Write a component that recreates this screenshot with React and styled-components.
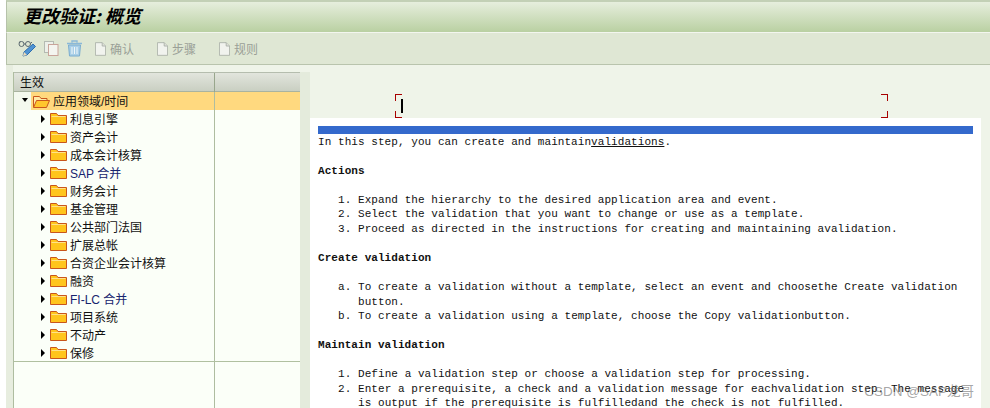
import React from 'react';
import styled, { createGlobalStyle } from 'styled-components';

const GlobalStyle = createGlobalStyle`
  html, body {
    margin: 0;
    padding: 0;
    background: #fff;
  }
`;

const CJK = `"Liberation Sans", "Noto Sans CJK SC", sans-serif`;

const TREE_ITEMS = [
  '利息引擎',
  '资产会计',
  '成本会计核算',
  'SAP 合并',
  '财务会计',
  '基金管理',
  '公共部门法国',
  '扩展总帐',
  '合资企业会计核算',
  '融资',
  'FI-LC 合并',
  '项目系统',
  '不动产',
  '保修',
];

const DocIcon = () => (
  <svg width="13" height="16" viewBox="0 0 13 16">
    <path d="M.5 .5h8l4 4v11H.5z" fill="#f1f3ee" stroke="#a9aea6" />
    <path d="M8.5 .5v4h4" fill="#dcdfd8" stroke="#a9aea6" />
  </svg>
);

const ToolButton = ({ label }) => (
  <TextTool>
    <DocIcon />
    <ToolLabel>{label}</ToolLabel>
  </TextTool>
);

const Folder = ({ open }) =>
  open ? (
    <svg width="17" height="13" viewBox="0 0 17 13">
      <path d="M.5 12V1.5h6l1.5 2h6V6" fill="#ffe9a8" stroke="#c8561c" />
      <path d="M.5 12.5L3.5 5.5H16.5L13.5 12.5z" fill="#ffc62e" stroke="#c8561c" />
    </svg>
  ) : (
    <ClosedFolder width="17" height="12" viewBox="0 0 17 12">
      <path d="M.5 11.5V.5h6l1.5 2h8.5v9z" fill="#ffc51c" stroke="#c8561c" />
      <path d="M1.5 3.5h14" stroke="#ffe18a" />
    </ClosedFolder>
  );

const App = () => (
  <Page>
    <GlobalStyle />
    <TitleBar>
      <Title>更改验证: 概览</Title>
    </TitleBar>
    <Toolbar>
      <IconGroup>
        <svg width="19" height="18" viewBox="0 0 19 18">
          <circle cx="3.5" cy="4" r="2.5" fill="none" stroke="#5c6a70" />
          <circle cx="10" cy="4" r="2.5" fill="none" stroke="#5c6a70" />
          <path d="M6 4h1.5M1 3L2.5 1M12.5 3.5L14 2" stroke="#5c6a70" fill="none" />
          <path d="M5 16l1-4L15 4l2.5 2.5L9 15z" fill="#4f93d3" stroke="#2f6fae" />
          <path d="M5 16l1-4 3 3z" fill="#f0dcb8" />
        </svg>
        <svg width="15" height="15" viewBox="0 0 15 15">
          <rect x="0.5" y="0.5" width="9" height="11" fill="#edf0ea" stroke="#b4bab2" />
          <rect x="4.5" y="3.5" width="9.5" height="11" fill="#f4f5f0" stroke="#c9a49a" />
        </svg>
        <svg width="17" height="17" viewBox="0 0 17 17">
          <path d="M1 3.5h15M6 2.5V1h5v1.5" fill="none" stroke="#8ab8d8" strokeWidth="1.4" />
          <path d="M2.5 5h12l-1 11h-10z" fill="#a9cfe8" stroke="#7aaccf" />
          <path d="M6 7v7M8.5 7v7M11 7v7" stroke="#f0f6f8" />
        </svg>
      </IconGroup>
      <ToolButton label="确认" />
      <ToolButton label="步骤" />
      <ToolButton label="规则" />
    </Toolbar>
    <Workspace>
      <Gutter />
      <TreePanel>
        <TreeHeader>
          <HeaderCell>生效</HeaderCell>
          <HeaderCell />
        </TreeHeader>
        <TreeBody>
          <TreeRow $selected>
            <RootCell>
              <RootArrow />
              <RootLabel>
                <Folder open />
                <NodeText>应用领域/时间</NodeText>
              </RootLabel>
            </RootCell>
            <SideCell />
          </TreeRow>
          {TREE_ITEMS.map((item) => (
            <TreeRow key={item}>
              <NodeCell>
                <NodeArrow />
                <Folder />
                <NodeText $latin={/^[A-Z]/.test(item)}>{item}</NodeText>
              </NodeCell>
              <SideCell />
            </TreeRow>
          ))}
        </TreeBody>
        <TreeFiller>
          <div />
          <SideCell />
        </TreeFiller>
      </TreePanel>
      <Divider />
      <MainPane>
        <FrameRow>
          <FocusFrame>
            <Corner $top $left />
            <Corner $left />
            <Corner $top />
            <Corner />
            <Caret />
          </FocusFrame>
        </FrameRow>
        <DocPage>
          <BlueBar />
          <DocLine>
            In this step, you can create and maintain<DocLink>validations</DocLink>.
          </DocLine>
          <Blank />
          <DocHeading>Actions</DocHeading>
          <Blank />
          <DocItem $mark="1.">Expand the hierarchy to the desired application area and event.</DocItem>
          <DocItem $mark="2.">Select the validation that you want to change or use as a template.</DocItem>
          <DocItem $mark="3.">Proceed as directed in the instructions for creating and maintaining avalidation.</DocItem>
          <Blank />
          <DocHeading>Create validation</DocHeading>
          <Blank />
          <DocItem $mark="a.">To create a validation without a template, select an event and choosethe Create validation button.</DocItem>
          <DocItem $mark="b.">To create a validation using a template, choose the Copy validationbutton.</DocItem>
          <Blank />
          <DocHeading>Maintain validation</DocHeading>
          <Blank />
          <DocItem $mark="1.">Define a validation step or choose a validation step for processing.</DocItem>
          <DocItem $mark="2.">Enter a prerequisite, a check and a validation message for eachvalidation step. The message is output if the prerequisite is fulfilledand the check is not fulfilled.</DocItem>
        </DocPage>
      </MainPane>
    </Workspace>
    <Watermark>CSDN @SAP龙哥</Watermark>
  </Page>
);

const Page = styled.div`
  position: relative;
  width: 990px;
  height: 408px;
  overflow: hidden;
  background: #fff;
  padding-left: 6px;
  box-sizing: border-box;
  font-family: ${CJK};
`;

const TitleBar = styled.div`
  height: 32px;
  box-sizing: border-box;
  padding: 0 0 5px 16px;
  border-top: 2px solid #c3d0b6;
  border-left: 1px solid #b6c2aa;
  background: linear-gradient(#e6eedd, #b9d0a2);
  display: flex;
  align-items: center;
`;

const Title = styled.h1`
  margin: 0;
  font-size: 18px;
  line-height: 20px;
  font-weight: 700;
  font-style: italic;
  color: #000;
  font-family: "Noto Sans CJK SC", sans-serif;
`;

const Toolbar = styled.div`
  height: 33px;
  box-sizing: border-box;
  padding-left: 11px;
  border-top: 1px solid #f3f6ef;
  border-left: 1px solid #b6c2aa;
  border-bottom: 1px solid #b9c4ad;
  background: #dfe7d4;
  display: flex;
  align-items: center;
  gap: 23px;
`;

const IconGroup = styled.div`
  display: flex;
  align-items: center;
  gap: 7px;
  margin-right: -22px;
  width: 76px;
`;

const TextTool = styled.div`
  display: flex;
  align-items: center;
  gap: 4px;
  width: 39px;
`;

const ToolLabel = styled.span`
  font-size: 12px;
  color: #9a9f97;
  white-space: nowrap;
`;

const Workspace = styled.div`
  display: flex;
  height: 343px;
  background: #eff4e9;
`;

const Gutter = styled.div`
  width: 7px;
  flex: none;
  background: #e7eddf;
`;

const TreePanel = styled.div`
  width: 286px;
  flex: none;
  margin-top: 7px;
  display: flex;
  flex-direction: column;
  border-left: 1px solid #aebda0;
  background: #fbfff8;
`;

const TreeHeader = styled.div`
  display: grid;
  grid-template-columns: 200px 1fr;
  height: 20px;
  flex: none;
  box-sizing: border-box;
  border-top: 1px solid #b5bdae;
  border-bottom: 1px solid #a9b39f;
  background: linear-gradient(#e2e5dd, #c9cfc2);
`;

const HeaderCell = styled.div`
  font-size: 12px;
  line-height: 20px;
  padding-left: 6px;
  color: #111;
  & + & {
    border-left: 1px solid #98a68c;
  }
`;

const TreeBody = styled.div`
  height: 270px;
  flex: none;
  overflow: hidden;
  box-sizing: border-box;
  border-bottom: 1px solid #b0c0a0;
`;

const TreeRow = styled.div`
  display: grid;
  grid-template-columns: 200px 1fr;
  height: 18px;
  background: ${({ $selected }) => ($selected ? 'linear-gradient(90deg, #f4f9ee 17px, #ffd97f 17px)' : 'transparent')};
`;

const SideCell = styled.div`
  border-left: 1px solid #aebda0;
`;

const RootCell = styled.div`
  display: flex;
  align-items: center;
  padding: 1px 0 0 8px;
`;

const RootLabel = styled.div`
  display: flex;
  align-items: center;
  margin-left: 5px;
`;

const RootArrow = styled.span`
  width: 0;
  height: 0;
  border-left: 3.5px solid transparent;
  border-right: 3.5px solid transparent;
  border-top: 4px solid #000;
  margin-bottom: 3px;
`;

const NodeCell = styled.div`
  display: flex;
  align-items: center;
  padding: 1px 0 0 27px;
`;

const NodeArrow = styled.span`
  width: 0;
  height: 0;
  margin: 0 5px 2px 0;
  border-top: 4px solid transparent;
  border-bottom: 4px solid transparent;
  border-left: 4px solid #000;
`;

const ClosedFolder = styled.svg`
  margin-bottom: 2px;
`;

const NodeText = styled.span`
  margin-left: 3px;
  font-size: 12px;
  line-height: 16px;
  color: ${({ $latin }) => ($latin ? '#16246e' : '#111')};
  white-space: nowrap;
`;

const TreeFiller = styled.div`
  flex: 1;
  display: grid;
  grid-template-columns: 200px 1fr;
`;

const Divider = styled.div`
  width: 10px;
  flex: none;
  margin-top: 7px;
  background: #e4ebdc;
`;

const MainPane = styled.div`
  flex: 1;
  min-width: 0;
  background: #eff4e9;
  padding-right: 9px;
`;

const FrameRow = styled.div`
  height: 53px;
  box-sizing: border-box;
  padding: 29px 0 0 85px;
`;

const FocusFrame = styled.div`
  position: relative;
  width: 493px;
  height: 24px;
`;

const Corner = styled.span`
  position: absolute;
  width: 6px;
  height: 6px;
  border: 0 solid #a80000;
  ${({ $left }) => ($left ? 'left: 0; border-left-width: 1px;' : 'right: 0; border-right-width: 1px;')}
  ${({ $top }) => ($top ? 'top: 0; border-top-width: 1px;' : 'bottom: 0; border-bottom-width: 1px;')}
`;

const Caret = styled.span`
  position: absolute;
  left: 6px;
  top: 5px;
  width: 2px;
  height: 14px;
  background: #000;
`;

const DocPage = styled.div`
  height: 290px;
  overflow: hidden;
  box-sizing: border-box;
  background: #fff;
  padding: 8px 8px 0;
  font-family: "Liberation Mono", "DejaVu Sans Mono", monospace;
  font-size: 11px;
  letter-spacing: 0.06px;
  line-height: 14.55px;
  color: #111;
`;

const BlueBar = styled.div`
  height: 8px;
  margin-bottom: 0.5px;
  background: #3469cc;
`;

const DocLine = styled.div`
  white-space: nowrap;
`;

const DocLink = styled.span`
  text-decoration: underline;
`;

const Blank = styled.div`
  height: 14.55px;
`;

const DocHeading = styled.div`
  font-weight: 700;
`;

const DocItem = styled.div`
  position: relative;
  padding-left: 40px;
  &::before {
    content: '${({ $mark }) => $mark}';
    position: absolute;
    left: 20px;
  }
`;

const Watermark = styled.div`
  position: absolute;
  right: 16px;
  bottom: 8px;
  font-family: ${CJK};
  font-size: 13.5px;
  color: rgba(110, 110, 110, 0.62);
  white-space: nowrap;
`;

export default App;
